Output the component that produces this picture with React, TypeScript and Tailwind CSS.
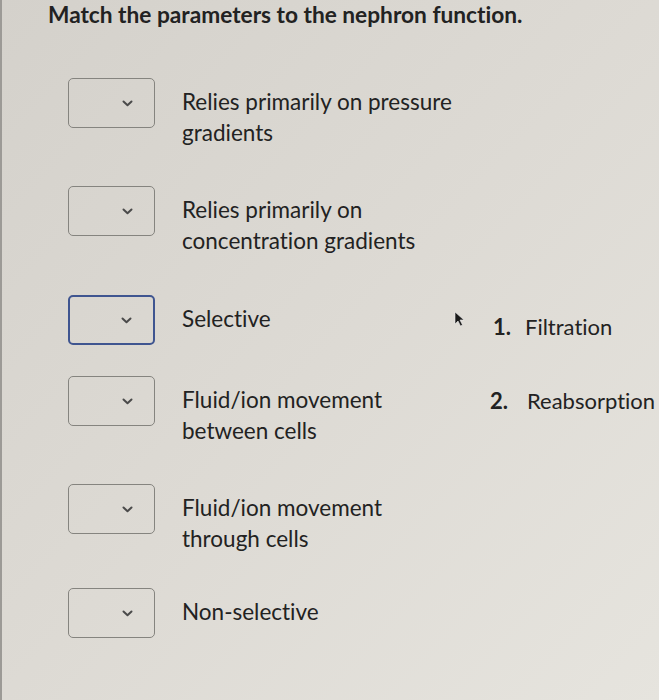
import React from "react";

const rows = [
  { lines: ["Relies primarily on pressure", "gradients"], h: "h-[108px]" },
  { lines: ["Relies primarily on", "concentration gradients"], h: "h-[109px]" },
  { lines: ["Selective"], h: "h-[81px]", focused: true },
  { lines: ["Fluid/ion movement", "between cells"], h: "h-[108px]" },
  { lines: ["Fluid/ion movement", "through cells"], h: "h-[104px]" },
  { lines: ["Non-selective"], h: "h-[60px]" },
];

function Chevron() {
  return (
    <svg width="11" height="7" viewBox="0 0 11 7" fill="none">
      <path d="M1.5 1.5 L5.5 5.2 L9.5 1.5" stroke="#4a4a4a" strokeWidth="2" strokeLinecap="round" strokeLinejoin="round" />
    </svg>
  );
}

function Select({ focused }: { focused?: boolean }) {
  return (
    <div
      className={
        "flex h-[50px] w-[87px] shrink-0 items-center justify-end rounded-[5px] pr-[21px] " +
        (focused ? "border-2 border-[#3f5590]" : "border-[1.5px] border-[#85847f]")
      }
    >
      <Chevron />
    </div>
  );
}

export default function App() {
  return (
    <div
      className="relative h-[700px] w-[659px] overflow-hidden bg-gradient-to-br from-[#d4d1cb] via-[#dddad4] to-[#e6e4de] text-[#222] [font-variant-ligatures:none]"
      style={{ fontFamily: "Lato, 'Open Sans', sans-serif" }}
    >
      <div className="absolute left-0 top-0 h-full w-[2px] bg-[#9c9a96]" />
      <h1 className="pl-[48px] text-[22.7px] font-bold leading-[30px]">
        Match the parameters to the nephron function.
      </h1>

      <div className="mt-[48px] flex">
        <div className="flex w-[440px] flex-col pl-[68px]">
          {rows.map((r, i) => (
            <div key={i} className={"flex items-start gap-[27px] " + r.h}>
              <Select focused={r.focused} />
              <div className="whitespace-nowrap pt-[8px] text-[22.5px] leading-[31px]">
                {r.lines.map((l, j) => (
                  <div key={j}>{l}</div>
                ))}
              </div>
            </div>
          ))}
        </div>

        <div className="relative flex flex-col gap-[43px] whitespace-nowrap pl-[50px] pt-[233px] text-[22px] leading-[31px]">
          <div className="flex">
            <span className="w-[35px] pl-[3px] font-bold">1.</span>
            <span>Filtration</span>
          </div>
          <div className="flex">
            <span className="w-[37px] font-bold">2.</span>
            <span>Reabsorption</span>
          </div>
          <svg className="absolute left-[14px] top-[233px]" width="12" height="16" viewBox="0 0 12 16">
            <path d="M1 1 L1 13 L4 10 L6.5 15 L8.5 14 L6 9 L10 9 Z" fill="#1a1a1a" stroke="#eee" strokeWidth="0.6" />
          </svg>
        </div>
      </div>
    </div>
  );
}
